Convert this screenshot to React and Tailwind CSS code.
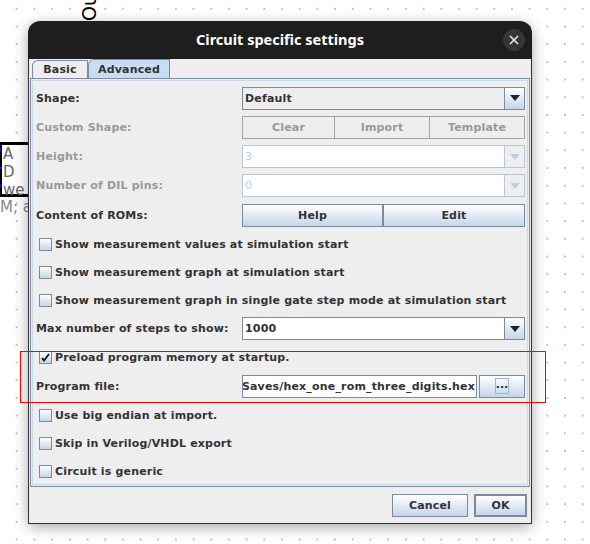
import React from "react";

const font = "font-['DejaVu_Sans',sans-serif]";

const Arrow = ({ disabled }) => (
  <div
    className={`flex w-[20px] items-center justify-center border-l ${
      disabled
        ? "border-[#b8c6d6] bg-[#eeeeee]"
        : "border-[#7a8aa0] bg-gradient-to-b from-white to-[#c4d6e8]"
    }`}
  >
    <svg width="10" height="6" viewBox="0 0 10 6">
      <path d="M0 0 L10 0 L5 6 Z" fill={disabled ? "#b8cfe5" : "#222"} />
    </svg>
  </div>
);

const Combo = ({ value, disabled, editable }) => (
  <div
    className={`flex h-[23px] w-full border ${
      disabled ? "border-[#b8c6d6]" : "border-[#7a8aa0]"
    }`}
  >
    <div
      className={`flex flex-1 items-center px-[2px] ${
        editable ? "bg-white" : "bg-[#eeeeee]"
      } ${disabled ? "text-[#b8cfe5] font-normal" : "text-[#333333]"}`}
    >
      {value}
    </div>
    <Arrow disabled={disabled} />
  </div>
);

const Btn = ({ children, className = "", disabled }) => (
  <div
    className={`flex h-[23px] items-center justify-center border ${
      disabled
        ? "border-[#a3a3a3] bg-[#eeeeee] text-[#999999]"
        : "border-[#7a8aa0] bg-gradient-to-b from-white to-[#c4d6e8] text-[#333333]"
    } ${className}`}
  >
    {children}
  </div>
);

const Check = ({ checked }) => (
  <div className="flex h-[13px] w-[13px] items-center justify-center border border-[#7a8aa0] bg-gradient-to-b from-white to-[#c4d6e8]">
    {checked && (
      <svg width="9" height="9" viewBox="0 0 9 9">
        <path d="M1 5 L3 7.5 L8 1" stroke="#111" strokeWidth="1.8" fill="none" />
      </svg>
    )}
  </div>
);

const Row = ({ label, disabled, h = "h-[29px]", children }) => (
  <div className={`flex shrink-0 items-center ${h}`}>
    <div className={`w-[209px] pl-[3px] ${disabled ? "text-[#999999]" : "text-[#333333]"}`}>
      {label}
    </div>
    <div className="flex flex-1 items-center">{children}</div>
  </div>
);

const CheckRow = ({ label, checked, h = "h-[28px]" }) => (
  <div className={`flex shrink-0 items-center gap-[3px] pl-[6px] text-[#333333] ${h}`}>
    <Check checked={checked} />
    <span>{label}</span>
  </div>
);

export default function App() {
  return (
    <div className="relative h-[544px] w-[590px] overflow-hidden bg-white bg-[radial-gradient(circle,#c4c4c4_0.9px,transparent_1.3px)] bg-[size:17.7px_17.7px] bg-[position:7.85px_0px]">
      {/* circuit bits behind the dialog */}
      <div className="absolute left-[76px] top-[-2px] -rotate-90 font-['DejaVu_Sans',sans-serif] text-[19px] leading-none text-black">
        Ou
      </div>
      <div className="absolute left-[0px] top-[142px] h-[55px] w-[40px] border-[3px] border-l-[2px] border-black bg-white font-['DejaVu_Sans',sans-serif] text-[15px] leading-[18px] text-[#666666]">
        <div className="pl-[1px]">A</div>
        <div className="pl-[1px]">D</div>
        <div className="pl-[1px]">we</div>
      </div>
      <div className="absolute left-[-2px] top-[148px] h-[4px] w-[4px] rounded-full bg-[#1010d0]" />
      <div className="absolute left-[-2px] top-[166px] h-[4px] w-[4px] rounded-full bg-[#1010d0]" />
      <div className="absolute left-[-2px] top-[184px] h-[4px] w-[4px] rounded-full bg-[#1010d0]" />
      <div className="absolute left-[0px] top-[196px] font-['DejaVu_Sans',sans-serif] text-[15px] text-[#888888]">
        M; a
      </div>

      {/* dialog */}
      <div className="absolute left-[28px] top-[21px] flex h-[503px] w-[504px] flex-col overflow-hidden rounded-t-[12px] shadow-[0_3px_14px_rgba(0,0,0,0.35)]">
        <div className="relative flex h-[38px] items-center justify-center bg-[#1e1e1e]">
          <span className="font-['Noto_Sans',sans-serif] text-[14.5px] font-bold text-white">
            Circuit specific settings
          </span>
          <div className="absolute right-[7px] top-[8px] flex h-[22px] w-[22px] items-center justify-center rounded-full bg-[#363636]">
            <svg width="10" height="10" viewBox="0 0 10 10">
              <path d="M1 1 L9 9 M9 1 L1 9" stroke="#eeeeee" strokeWidth="1.5" />
            </svg>
          </div>
        </div>

        <div
          className={`flex flex-1 flex-col border border-t-0 border-[#333333] bg-[#eeeeee] text-[11px] font-bold leading-none tracking-[0.17px] ${font}`}
        >
          {/* tabs */}
          <div className="flex h-[19px] items-end pl-[3px] pt-[1px]">
            <div className="flex h-[18px] w-[56px] items-center justify-center rounded-tl-[6px] border border-b-0 border-[#7a8aa0] text-[#333333]">
              Basic
            </div>
            <div className="flex h-[19px] w-[82px] items-center justify-center rounded-tl-[6px] border border-b-0 border-[#7a8aa0] bg-[#c8ddf2] text-[#333333]">
              Advanced
            </div>
          </div>

          {/* tab panel */}
          <div className="mx-[1px] border border-[#7a8aa0] p-[1px]">
            <div className="flex h-[405px] flex-col overflow-hidden border border-[#c8d8e8] pr-[2px] pt-[2px]">
              <Row label="Shape:" h="h-[30px]">
                <Combo value="Default" />
              </Row>
              <Row label="Custom Shape:" disabled>
                <Btn disabled className="w-[93px]">Clear</Btn>
                <Btn disabled className="w-[95px] border-l-0">Import</Btn>
                <Btn disabled className="flex-1 border-l-0">Template</Btn>
              </Row>
              <Row label="Height:" disabled>
                <Combo value="3" disabled editable />
              </Row>
              <Row label="Number of DIL pins:" disabled>
                <Combo value="0" disabled editable />
              </Row>
              <Row label="Content of ROMs:" h="h-[30px]">
                <Btn className="w-[141px]">Help</Btn>
                <Btn className="flex-1">Edit</Btn>
              </Row>
              <CheckRow label="Show measurement values at simulation start" />
              <CheckRow label="Show measurement graph at simulation start" />
              <CheckRow label="Show measurement graph in single gate step mode at simulation start" />
              <Row label="Max number of steps to show:">
                <Combo value="1000" editable />
              </Row>
              <CheckRow label="Preload program memory at startup." checked h="h-[28px]" />
              <Row label="Program file:" h="h-[30px]">
                <div className="flex h-[23px] w-[235px] items-center justify-end overflow-hidden whitespace-nowrap border border-[#7a8aa0] bg-white pr-[1px] text-[#333333]">
                  /home/user/Digital/Saves/hex_one_rom_three_digits.hex
                </div>
                <div className="ml-[2px] flex h-[23px] flex-1 items-center justify-center border border-[#7a8aa0] bg-gradient-to-b from-white to-[#c4d6e8] p-[3px] text-[#333333]">
                  <div className="flex h-[16px] w-[14px] items-end justify-center border border-[#9fb3c8] pb-[3px] tracking-normal">
                    ...
                  </div>
                </div>
              </Row>
              <CheckRow label="Use big endian at import." />
              <CheckRow label="Skip in Verilog/VHDL export" />
              <CheckRow label="Circuit is generic" />
            </div>
          </div>

          {/* footer */}
          <div className="flex flex-1 items-center justify-end gap-[6px] pr-[4px]">
            <Btn className="w-[76px]">Cancel</Btn>
            <Btn className="w-[53px] border-2 border-[#7a8aa0]">OK</Btn>
          </div>
        </div>
      </div>

      {/* red highlight */}
      <div className="absolute left-[20px] top-[351px] h-[52px] w-[526px] border border-[#ff0000]" />
    </div>
  );
}
